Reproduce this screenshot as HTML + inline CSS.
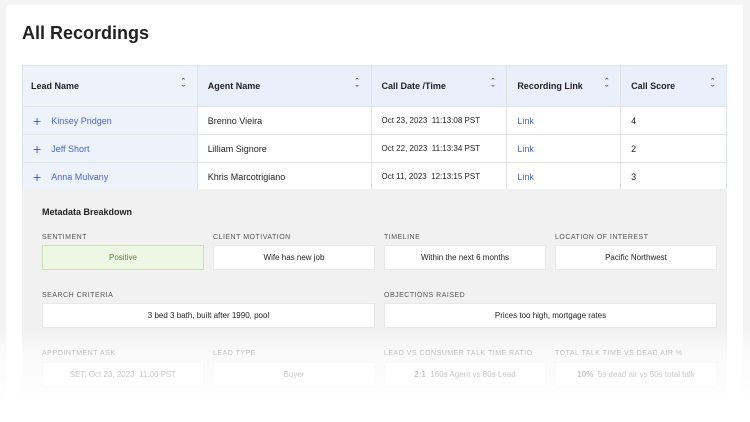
<!DOCTYPE html>
<html><head><style>
*{margin:0;padding:0;box-sizing:border-box}
body{width:750px;height:422px;background:#f4f4f4;font-family:"Liberation Sans",sans-serif;position:relative;overflow:hidden}
.card{position:absolute;left:6px;top:5px;width:737px;height:417px;background:#fff}
h1{position:absolute;left:22px;top:23px;font-size:18px;font-weight:bold;color:#222}
.t{position:absolute;left:22px;top:65px;width:705px;border:1px solid #dfe4ee}
.r{display:flex;height:28px;border-top:1px solid #e3e3e3;font-size:9px;color:#222}
.r.h{height:40px;background:#eaf0fb;border-top:none;font-weight:bold;font-size:9px}
.r div{display:flex;align-items:center;padding-left:10px;border-right:1px solid #e3e3e3;position:relative}
.c1{width:175px;background:#eef2fb}.c2{width:174px}.c3{width:136px}.c4{width:114px}.c5{width:105px;border-right:none!important}
.h .c1{padding-left:8px}
.s{position:absolute;right:12px;top:13px;font-size:9px;line-height:7px;color:#444;font-weight:bold}
.lk{color:#4a66c8}
.pl{color:#4a66c8;font-size:14px;margin-right:10px;font-weight:normal}
.meta{position:absolute;left:22px;top:189px;width:705px;height:215px;background:#f1f1f1}
.mt{position:absolute;left:20px;top:18px;font-size:9px;font-weight:bold;color:#222}
.lb{position:absolute;font-size:7px;letter-spacing:.5px;color:#555}
.bx{position:absolute;height:25px;background:#fff;border:1px solid #e8e8e8;font-size:8px;color:#222;display:flex;align-items:center;justify-content:center}
.fade{position:absolute;left:0;top:330px;width:750px;height:92px;background:linear-gradient(rgba(255,255,255,0),rgba(255,255,255,0.65) 25%,rgba(255,255,255,0.75) 50%,#fff 80%)}
</style></head><body>
<div class="card"></div>
<h1>All Recordings</h1>
<div class="t">
<div class="r h"><div class="c1">Lead Name<span class="s">ˆ<br>ˇ</span></div><div class="c2">Agent Name<span class="s">ˆ<br>ˇ</span></div><div class="c3">Call Date /Time<span class="s">ˆ<br>ˇ</span></div><div class="c4">Recording Link<span class="s">ˆ<br>ˇ</span></div><div class="c5">Call Score<span class="s">ˆ<br>ˇ</span></div></div>
<div class="r"><div class="c1 lk"><span class="pl">+</span>Kinsey Pridgen</div><div class="c2">Brenno Vieira</div><div class="c3" style="font-size:8px">Oct 23, 2023&nbsp; 11:13:08 PST</div><div class="c4 lk">Link</div><div class="c5">4</div></div>
<div class="r"><div class="c1 lk"><span class="pl">+</span>Jeff Short</div><div class="c2">Lilliam Signore</div><div class="c3" style="font-size:8px">Oct 22, 2023&nbsp; 11:13:34 PST</div><div class="c4 lk">Link</div><div class="c5">2</div></div>
<div class="r"><div class="c1 lk"><span class="pl">+</span>Anna Mulvany</div><div class="c2">Khris Marcotrigiano</div><div class="c3" style="font-size:8px">Oct 11, 2023&nbsp; 12:13:15 PST</div><div class="c4 lk">Link</div><div class="c5">3</div></div>
</div>
<div class="meta">
<div class="mt">Metadata Breakdown</div>
<div class="lb" style="left:20px;top:45px">SENTIMENT</div>
<div class="lb" style="left:191px;top:45px">CLIENT MOTIVATION</div>
<div class="lb" style="left:362px;top:45px">TIMELINE</div>
<div class="lb" style="left:533px;top:45px">LOCATION OF INTEREST</div>
<div class="bx" style="left:20px;top:56px;width:162px;background:#eef7e3;border-color:#cfe0b8;color:#5a8a3a">Positive</div>
<div class="bx" style="left:191px;top:56px;width:162px">Wife has new job</div>
<div class="bx" style="left:362px;top:56px;width:162px">Within the next 6 months</div>
<div class="bx" style="left:533px;top:56px;width:162px">Pacific Northwest</div>
<div class="lb" style="left:20px;top:103px">SEARCH CRITERIA</div>
<div class="lb" style="left:362px;top:103px">OBJECTIONS RAISED</div>
<div class="bx" style="left:20px;top:114px;width:333px">3 bed 3 bath, built after 1990, pool</div>
<div class="bx" style="left:362px;top:114px;width:333px">Prices too high, mortgage rates</div>
<div class="lb" style="left:20px;top:161px">APPOINTMENT ASK</div>
<div class="lb" style="left:191px;top:161px">LEAD TYPE</div>
<div class="lb" style="left:362px;top:161px">LEAD VS CONSUMER TALK TIME RATIO</div>
<div class="lb" style="left:533px;top:161px">TOTAL TALK TIME VS DEAD AIR %</div>
<div class="bx" style="left:20px;top:173px;width:162px">SET: Oct 23, 2023&nbsp; 11:00 PST</div>
<div class="bx" style="left:191px;top:173px;width:162px">Buyer</div>
<div class="bx" style="left:362px;top:173px;width:162px"><b>2:1</b>&nbsp; 160s Agent vs 80s Lead</div>
<div class="bx" style="left:533px;top:173px;width:162px"><b>10%</b>&nbsp; 5s dead air vs 50s total talk</div>
</div>
<div class="fade"></div>
</body></html>
